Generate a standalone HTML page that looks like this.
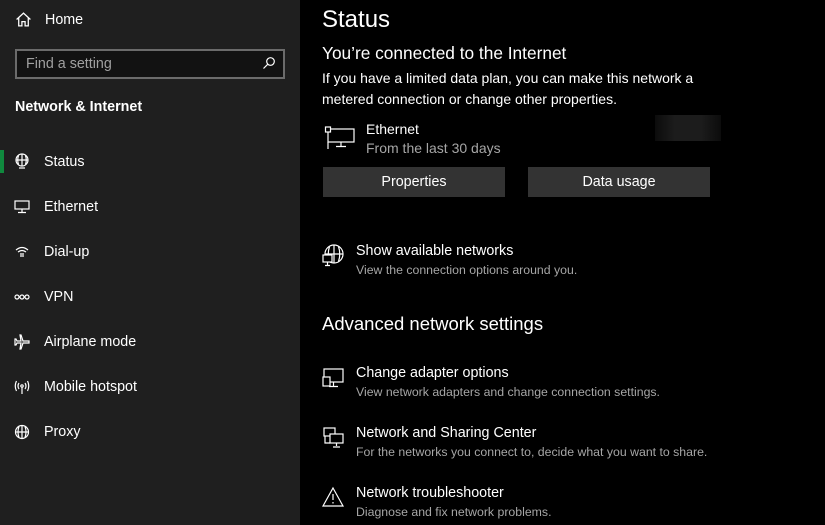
<!DOCTYPE html>
<html><head><meta charset="utf-8"><style>
*{margin:0;padding:0;box-sizing:border-box}
body{width:825px;height:525px;overflow:hidden;background:#000;font-family:"Liberation Sans",sans-serif;color:#fff;position:relative}
.side{position:absolute;left:0;top:0;width:300px;height:525px;background:#1f1f1f}
.a{position:absolute;white-space:nowrap}
.nav{font-size:14.3px}
.ic{position:absolute;width:18px;height:18px}
.sub{font-size:12.3px;color:#a6a6a6}
.btn{position:absolute;top:167px;width:182px;height:30px;background:#333;font-size:14.3px;text-align:center;line-height:31px}
svg{stroke:#fff;fill:none;stroke-width:1.2}
</style></head><body>
<div class="side">
<svg class="ic" style="left:15px;top:11px;width:17px;height:17px" viewBox="0 0 16 16"><path d="M1.5 8L8 2 14.5 8M3.5 6.5V14H6.5V10H9.5V14H12.5V6.5"/></svg>
<div class="a nav" style="left:45px;top:12px">Home</div>
<div class="a" style="left:15px;top:49px;width:270px;height:30px;border:2px solid #6b6b6b;background:#121212"></div>
<div class="a" style="left:26px;top:56px;font-size:14.3px;color:#a0a0a0">Find a setting</div>
<svg class="ic" style="left:262px;top:56px;width:14px;height:14px" viewBox="0 0 14 14"><circle cx="8.5" cy="5.5" r="3.8"/><path d="M5.8 8.2L1.5 12.5"/></svg>
<div class="a" style="left:15px;top:99px;font-size:14.3px;font-weight:bold">Network &amp; Internet</div>
<div class="a" style="left:0;top:150px;width:4px;height:23px;background:#10893e"></div>
<svg class="ic" style="left:14px;top:153px;width:16px;height:16px" viewBox="0 0 16 16"><circle cx="8" cy="7" r="6"/><path d="M2 7H14M8 1V13M4.5 2.5Q3 7 4.5 11.5M11.5 2.5Q13 7 11.5 11.5M5 15H11"/></svg>
<div class="a nav" style="left:44px;top:154px">Status</div>
<svg class="ic" style="left:14px;top:199px;width:16px;height:16px" viewBox="0 0 16 16"><rect x="1" y="2" width="14" height="8"/><path d="M8 10V13M4 13.5H12"/></svg>
<div class="a nav" style="left:44px;top:199px">Ethernet</div>
<svg class="ic" style="left:14px;top:244px;width:16px;height:16px" viewBox="0 0 16 16"><path d="M2 6Q8 1 14 6M4 8Q8 5 12 8M6 10h4M6 12h4"/></svg>
<div class="a nav" style="left:44px;top:244px">Dial-up</div>
<svg class="ic" style="left:14px;top:289px;width:16px;height:16px" viewBox="0 0 16 16"><circle cx="3" cy="8" r="2"/><circle cx="8" cy="8" r="2"/><circle cx="13" cy="8" r="2"/></svg>
<div class="a nav" style="left:44px;top:289px">VPN</div>
<svg class="ic" style="left:14px;top:334px;width:16px;height:16px" viewBox="0 0 16 16"><path d="M7 1L9 7H15V9H9L7 15H6L7 9H3L2 11H1V5H2L3 7H7L6 1Z"/></svg>
<div class="a nav" style="left:44px;top:334px">Airplane mode</div>
<svg class="ic" style="left:14px;top:379px;width:16px;height:16px" viewBox="0 0 16 16"><circle cx="8" cy="7" r="1.2"/><path d="M8 8V15M5 4Q3 7 5 10M11 4Q13 7 11 10M2.5 2Q0 7 2.5 12M13.5 2Q16 7 13.5 12"/></svg>
<div class="a nav" style="left:44px;top:379px">Mobile hotspot</div>
<svg class="ic" style="left:14px;top:424px;width:16px;height:16px" viewBox="0 0 16 16"><circle cx="8" cy="8" r="6.5"/><path d="M1.5 8H14.5M8 1.5V14.5M5 2.5Q3 8 5 13.5M11 2.5Q13 8 11 13.5"/></svg>
<div class="a nav" style="left:44px;top:424px">Proxy</div>
</div>
<div class="a" style="left:322px;top:6px;font-size:24px">Status</div>
<div class="a" style="left:322px;top:43px;font-size:17.3px">You’re connected to the Internet</div>
<div class="a" style="left:322px;top:68px;font-size:14px;line-height:21px">If you have a limited data plan, you can make this network a<br>metered connection or change other properties.</div>
<svg class="ic" style="left:324px;top:124px;width:32px;height:28px" viewBox="0 0 32 28"><rect x="4" y="5" width="26" height="13"/><rect x="1.5" y="3" width="5" height="5" style="fill:#000"/><path d="M17 18V22M12 22.5H22M4 18V25"/></svg>
<div class="a" style="left:366px;top:121px;font-size:14px">Ethernet</div>
<div class="a" style="left:366px;top:140px;font-size:14px;color:#a6a6a6">From the last 30 days</div>
<div class="a" style="left:655px;top:115px;width:66px;height:26px;background:linear-gradient(90deg,#0c0c0c,#1c1c1c 30%,#1c1c1c 70%,#0c0c0c)"></div>
<div class="btn" style="left:323px">Properties</div>
<div class="btn" style="left:528px">Data usage</div>
<svg class="ic" style="left:322px;top:243px;width:24px;height:24px" viewBox="0 0 24 24"><circle cx="12" cy="11" r="9"/><path d="M3 11H21M12 2V20M7.5 3.5Q5 11 7.5 18.5M16.5 3.5Q19 11 16.5 18.5"/><rect x="1" y="12" width="9" height="7" style="fill:#000"/><path d="M5.5 19V22M3 22.5H8"/></svg>
<div class="a" style="left:356px;top:243px;font-size:14.3px">Show available networks</div>
<div class="a sub" style="left:356px;top:263px">View the connection options around you.</div>
<div class="a" style="left:322px;top:313px;font-size:18.5px">Advanced network settings</div>
<svg class="ic" style="left:322px;top:366px;width:24px;height:24px" viewBox="0 0 24 24"><rect x="2" y="3" width="19" height="13"/><path d="M11.5 16V20M7 20.5H16"/><rect x="1" y="11" width="7" height="9" style="fill:#000"/></svg>
<div class="a" style="left:356px;top:365px;font-size:14.3px">Change adapter options</div>
<div class="a sub" style="left:356px;top:385px">View network adapters and change connection settings.</div>
<svg class="ic" style="left:322px;top:426px;width:24px;height:24px" viewBox="0 0 24 24"><rect x="2" y="2" width="11" height="8"/><rect x="8" y="8" width="13" height="9" style="fill:#000"/><path d="M14.5 17V20M11 21H18M3 10V17H8"/></svg>
<div class="a" style="left:356px;top:425px;font-size:14.3px">Network and Sharing Center</div>
<div class="a sub" style="left:356px;top:445px">For the networks you connect to, decide what you want to share.</div>
<svg class="ic" style="left:322px;top:486px;width:22px;height:22px" viewBox="0 0 22 22"><path d="M11 2L21 20H1Z M11 8V14M11 16V17.5"/></svg>
<div class="a" style="left:356px;top:485px;font-size:14.3px">Network troubleshooter</div>
<div class="a sub" style="left:356px;top:505px">Diagnose and fix network problems.</div>
</body></html>
